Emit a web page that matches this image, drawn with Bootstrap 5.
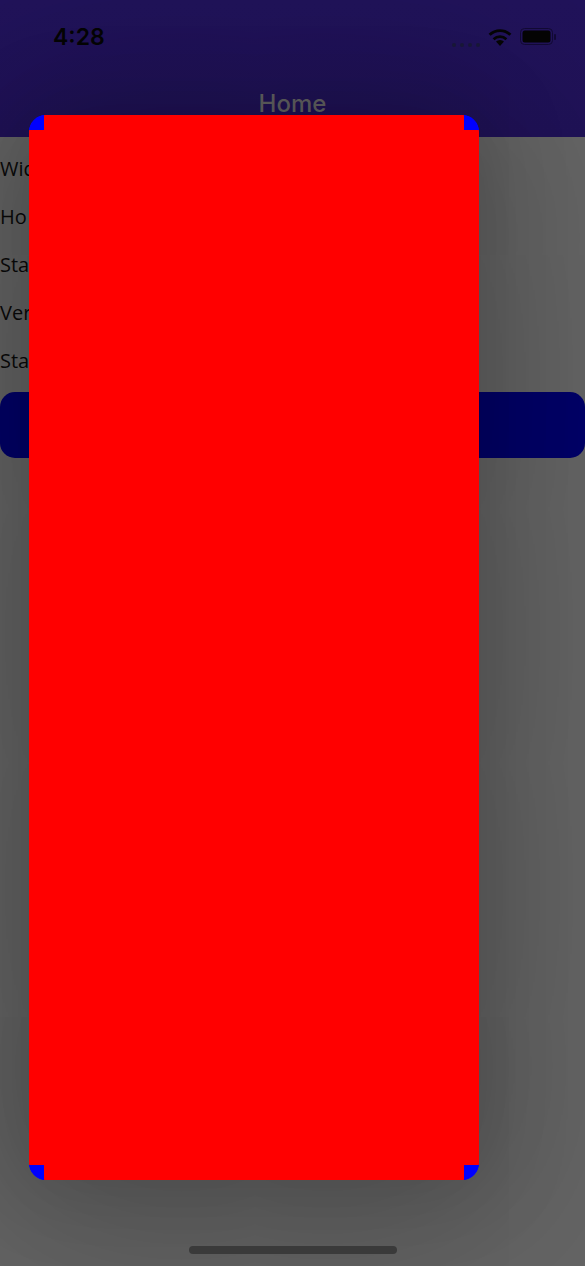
<!DOCTYPE html>
<html lang="en">
<head>
<meta charset="utf-8">
<title>Home</title>
<link href="https://cdn.jsdelivr.net/npm/bootstrap@5.3.0/dist/css/bootstrap.min.css" rel="stylesheet">
<style>
html,body{height:100%;margin:0}
body{background:#666;overflow:hidden;position:relative;font-family:"Open Sans","Noto Sans",sans-serif}
.app-head{height:137px;background:linear-gradient(#21135b,#201258);position:relative}
.stat-bar{height:74px;padding:0 29px 0 53px}
.clock{font:600 23px/1 Inter,"Liberation Sans",sans-serif;color:#050505}
.head-title{font:500 24px/1 Inter,"Liberation Sans",sans-serif;color:#666;margin-top:18px}
.info-line{font-size:20px;line-height:28px;color:#0a0a0a;margin:0 0 20px;white-space:nowrap}
.main-area{padding-top:18px}
.dim-btn{height:66px;background:#00006a;border-radius:15px;margin-top:-3px}
.sheet{position:absolute;left:28.7px;top:115.3px;width:450px;height:1065px;border-radius:17px;overflow:hidden;background:#00f}
.sheet-shadow{position:absolute;left:28.7px;top:115.3px;width:450px;height:1065px;border-radius:17px;box-shadow:0 0 90px 5px rgba(0,0,0,.15),0 20px 200px 50px rgba(0,0,0,.2)}
.sheet-inner{display:grid;grid-template-columns:15px 1fr 15px;grid-template-rows:15px 1fr 15px;height:100%}
.red-fill{background:#f00}
.blue-fill{background:#00f}
.home-bar{position:absolute;left:189px;top:1246px;width:208px;height:8px;border-radius:4px;background:#3a3a3a}
.sig-dot{width:4px;height:4px;border-radius:50%;background:#1a1a3a}
</style>
</head>
<body>
<header class="app-head">
  <div class="stat-bar d-flex align-items-center justify-content-between">
    <span class="clock">4:28</span>
    <div class="d-flex align-items-center">
      <div class="d-flex gap-1 me-2 mt-3">
        <span class="sig-dot"></span><span class="sig-dot"></span><span class="sig-dot"></span><span class="sig-dot"></span>
      </div>
      <svg width="24" height="18" viewBox="0 0 24 18" class="me-2" aria-hidden="true">
        <path d="M12 18 8 13.6a5.8 5.8 0 0 1 8 0z" fill="#050505"/>
        <path d="M5.6 11.2a9.2 9.2 0 0 1 12.8 0" fill="none" stroke="#050505" stroke-width="2.6"/>
        <path d="M1.6 6.8a15 15 0 0 1 20.8 0" fill="none" stroke="#050505" stroke-width="2.8"/>
      </svg>
      <svg width="36" height="18" viewBox="0 0 36 18" aria-hidden="true">
        <rect x=".5" y=".5" width="32" height="16" rx="4" fill="none" stroke="#120a35"/>
        <rect x="2.5" y="2.5" width="28" height="12" rx="2.5" fill="#050505"/>
        <rect x="34" y="6" width="2" height="6" rx="1" fill="#120a35"/>
      </svg>
    </div>
  </div>
  <div class="head-title text-center">Home</div>
</header>
<main class="main-area">
  <p class="info-line">Wid</p>
  <p class="info-line">Ho</p>
  <p class="info-line">Sta</p>
  <p class="info-line">Ver</p>
  <p class="info-line">Sta</p>
  <div class="dim-btn"></div>
</main>
<div class="sheet-shadow"></div>
<div class="sheet">
  <div class="sheet-inner">
    <div class="blue-fill"></div><div class="red-fill"></div><div class="blue-fill"></div>
    <div class="red-fill"></div><div class="red-fill"></div><div class="red-fill"></div>
    <div class="blue-fill"></div><div class="red-fill"></div><div class="blue-fill"></div>
  </div>
</div>
<div class="home-bar"></div>
<script src="https://cdn.jsdelivr.net/npm/bootstrap@5.3.0/dist/js/bootstrap.bundle.min.js"></script>
</body>
</html>
